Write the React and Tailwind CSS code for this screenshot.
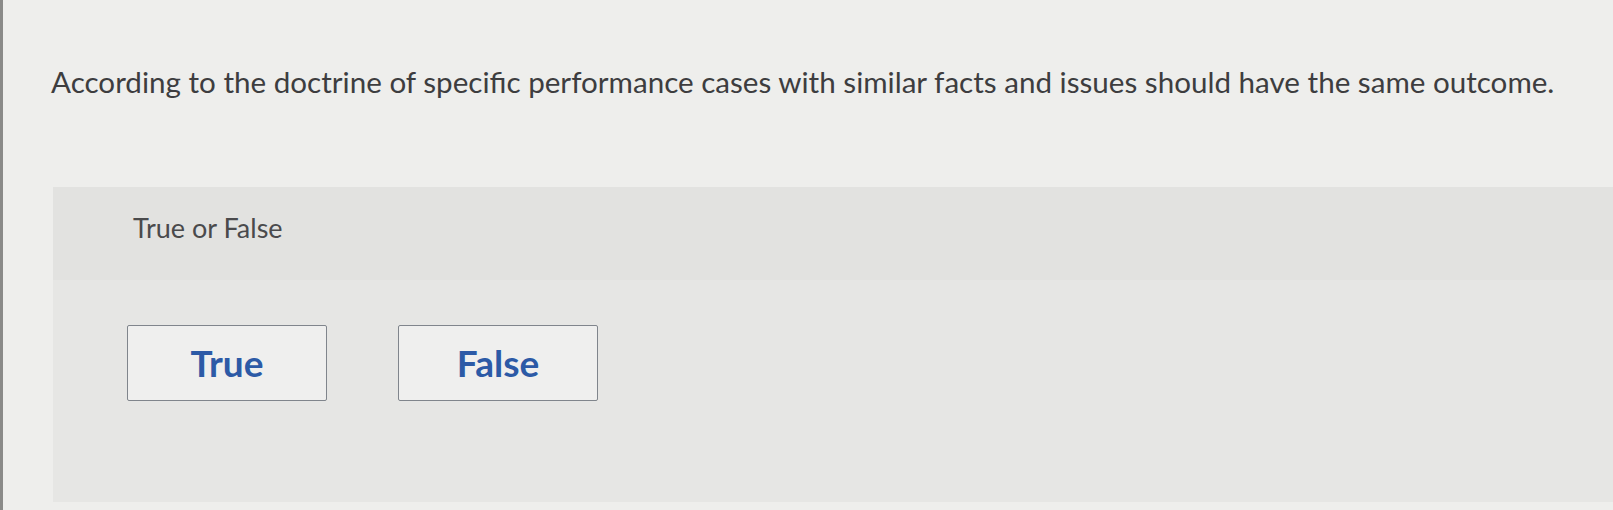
import React from 'react';

const App = () => {
    const options = ['True', 'False'];

    return (
        <div className="h-[510px] w-[1613px] overflow-hidden bg-[#eeeeec] border-l-[3px] border-[#8a8a88] flex flex-col" style={{ fontFamily: 'Lato, "Open Sans", sans-serif' }}>
            <p className="pl-[48px] pt-[62px] text-[29.6px] leading-[40px] text-[#3d3d3f] whitespace-nowrap">
                According to the doctrine of specific performance cases with similar facts and issues should have the same outcome.
            </p>

            <div className="ml-[50px] mt-[85px] mb-[8px] flex-1 bg-[#e6e6e4] flex flex-col">
                <div className="h-[93px] bg-[#e2e2e0] pl-[80px] pt-[23px]">
                    <span className="text-[27px] leading-[36px] text-[#4a4a4c]">True or False</span>
                </div>
                <div className="flex gap-[71px] pl-[74px] pt-[45px]">
                    {options.map(o => (
                        <button
                            key={o}
                            className="w-[200px] h-[76px] border-[1.5px] border-[#80858c] rounded-[2px] bg-[#efefee] text-[37px] font-bold text-[#2c5aa6]"
                        >
                            {o}
                        </button>
                    ))}
                </div>
            </div>
        </div>
    );
};

export default App;
